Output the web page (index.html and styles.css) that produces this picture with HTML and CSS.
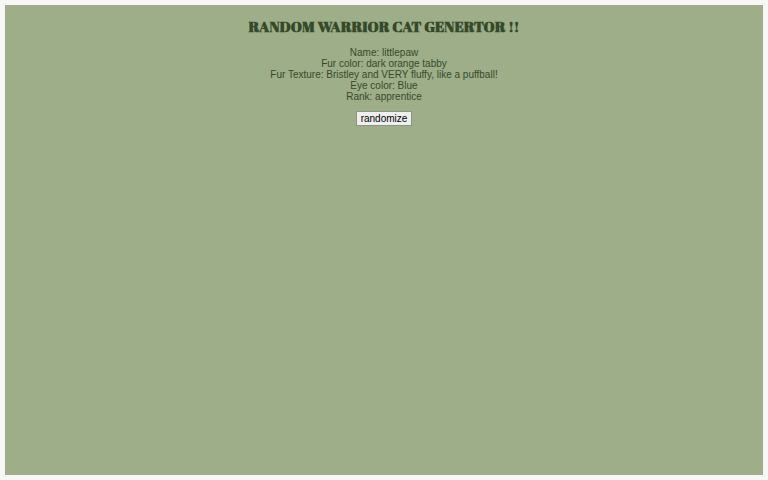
FILE: index.html
```html
<!DOCTYPE html>
<html lang="en">
<head>
    <meta charset="utf-8">
    <title>Random Warrior Cat</title>
    <link rel="stylesheet" href="styles.css">
</head>
<body>
    <main class="generator">
        <h1 class="title">RANDOM WARRIOR CAT GENERTOR !!</h1>

        <div class="cat">
            <div>Name: <span id="name">littlepaw</span></div>
            <div>Fur color: <span id="fur">dark orange tabby</span></div>
            <div>Fur Texture: <span id="texture">Bristley and VERY fluffy, like a puffball!</span></div>
            <div>Eye color: <span id="eyes">Blue</span></div>
            <div>Rank: <span id="rank">apprentice</span></div>
        </div>

        <button class="randomize" type="button">randomize</button>
    </main>
</body>
</html>
```

FILE: styles.css
```css
* {
    box-sizing: border-box;
}

body {
    margin: 0;
    padding: 5px;
    min-height: 100vh;
    display: flex;
    background: #f7f7f7;
    color: #364a2b;
    font-family: "Liberation Sans", Arial, sans-serif;
    font-size: 10px;
    line-height: 11px;
}

.generator {
    flex: 1;
    padding-top: 11px;
    background: #9dae88;
    text-align: center;
}

.title {
    margin: 0 0 11px;
    font-family: "Abril Fatface", "Liberation Serif", serif;
    font-size: 15px;
    font-weight: bold;
    line-height: 20px;
}

.cat {
    margin-bottom: 9px;
}

.randomize {
    height: 15px;
    padding: 0 4px;
    border: 1px solid #8b9680;
    background: #efefef;
    color: #000;
    font: inherit;
    line-height: 12px;
}
```
